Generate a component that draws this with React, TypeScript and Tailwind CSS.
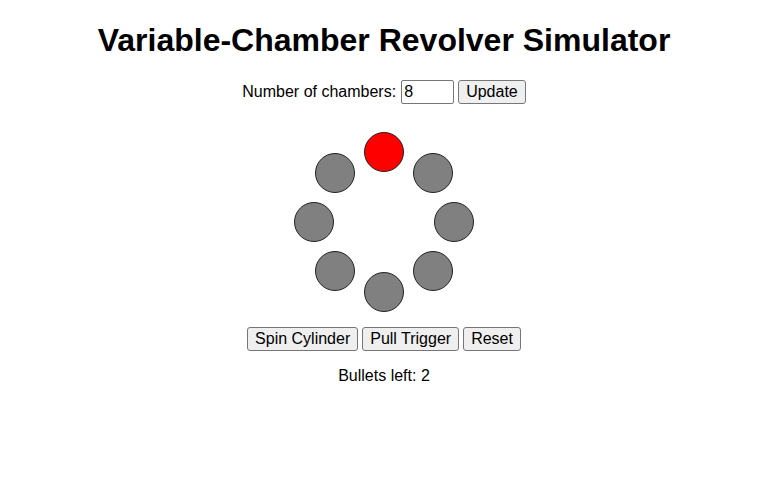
import { useState } from 'react'

const btn =
  'h-6 px-[7px] border border-[#767676] rounded-[3px] bg-[#efefef] text-black text-base leading-none hover:bg-[#e5e5e5]'

function makeBullets(n: number) {
  return Array.from({ length: n }, (_, i) => i === 0)
}

export default function App() {
  const [input, setInput] = useState('8')
  const [count, setCount] = useState(8)
  const [loaded, setLoaded] = useState<boolean[]>(() => {
    const b = Array(8).fill(false)
    b[0] = true
    b[3] = true
    return b
  })
  const [current, setCurrent] = useState(0)

  const bulletsLeft = loaded.filter(Boolean).length

  function update() {
    const n = Math.max(1, Math.min(20, parseInt(input) || 8))
    setCount(n)
    setLoaded(makeBullets(n))
    setCurrent(0)
  }

  function spin() {
    setCurrent(Math.floor(Math.random() * count))
  }

  function pull() {
    setLoaded(l => l.map((v, i) => (i === current ? false : v)))
    setCurrent(c => (c + 1) % count)
  }

  function reset() {
    setLoaded(makeBullets(count))
    setCurrent(0)
  }

  const radius = 70

  return (
    <div className="min-h-[480px] bg-white text-black text-center font-['Liberation_Sans',Arial,sans-serif]">
      <h1 className="pt-[22px] mb-[21px] text-[32px] leading-[37px] font-bold">
        Variable-Chamber Revolver Simulator
      </h1>

      <div className="flex items-center justify-center h-6 text-base">
        <span className="mr-[5px]">Number of chambers:</span>
        <input
          type="number"
          value={input}
          onChange={e => setInput(e.target.value)}
          className="w-[53px] h-6 px-[2px] border border-[#767676] rounded-[2px] text-base leading-none outline-none [appearance:textfield] [&::-webkit-inner-spin-button]:appearance-none"
        />
        <button onClick={update} className={`${btn} ml-1`}>
          Update
        </button>
      </div>

      {/* chambers */}
      <div className="relative w-[200px] h-[200px] mx-auto mt-[18px]">
        {Array.from({ length: count }, (_, i) => {
          const a = ((i - current) / count) * Math.PI * 2
          const x = 100 + radius * Math.sin(a) - 20
          const y = 100 - radius * Math.cos(a) - 20
          return (
            <div
              key={i}
              className={`absolute w-10 h-10 rounded-full border border-[#222] ${
                i === current ? 'bg-[#ff0000]' : 'bg-[#808080]'
              }`}
              style={{ left: x, top: y }}
            />
          )
        })}
      </div>

      <div className="flex items-center justify-center gap-1 mt-[5px]">
        <button onClick={spin} className={btn}>
          Spin Cylinder
        </button>
        <button onClick={pull} className={btn}>
          Pull Trigger
        </button>
        <button onClick={reset} className={btn}>
          Reset
        </button>
      </div>

      <p className="mt-4 text-base leading-[18px]">Bullets left: {bulletsLeft}</p>
    </div>
  )
}
